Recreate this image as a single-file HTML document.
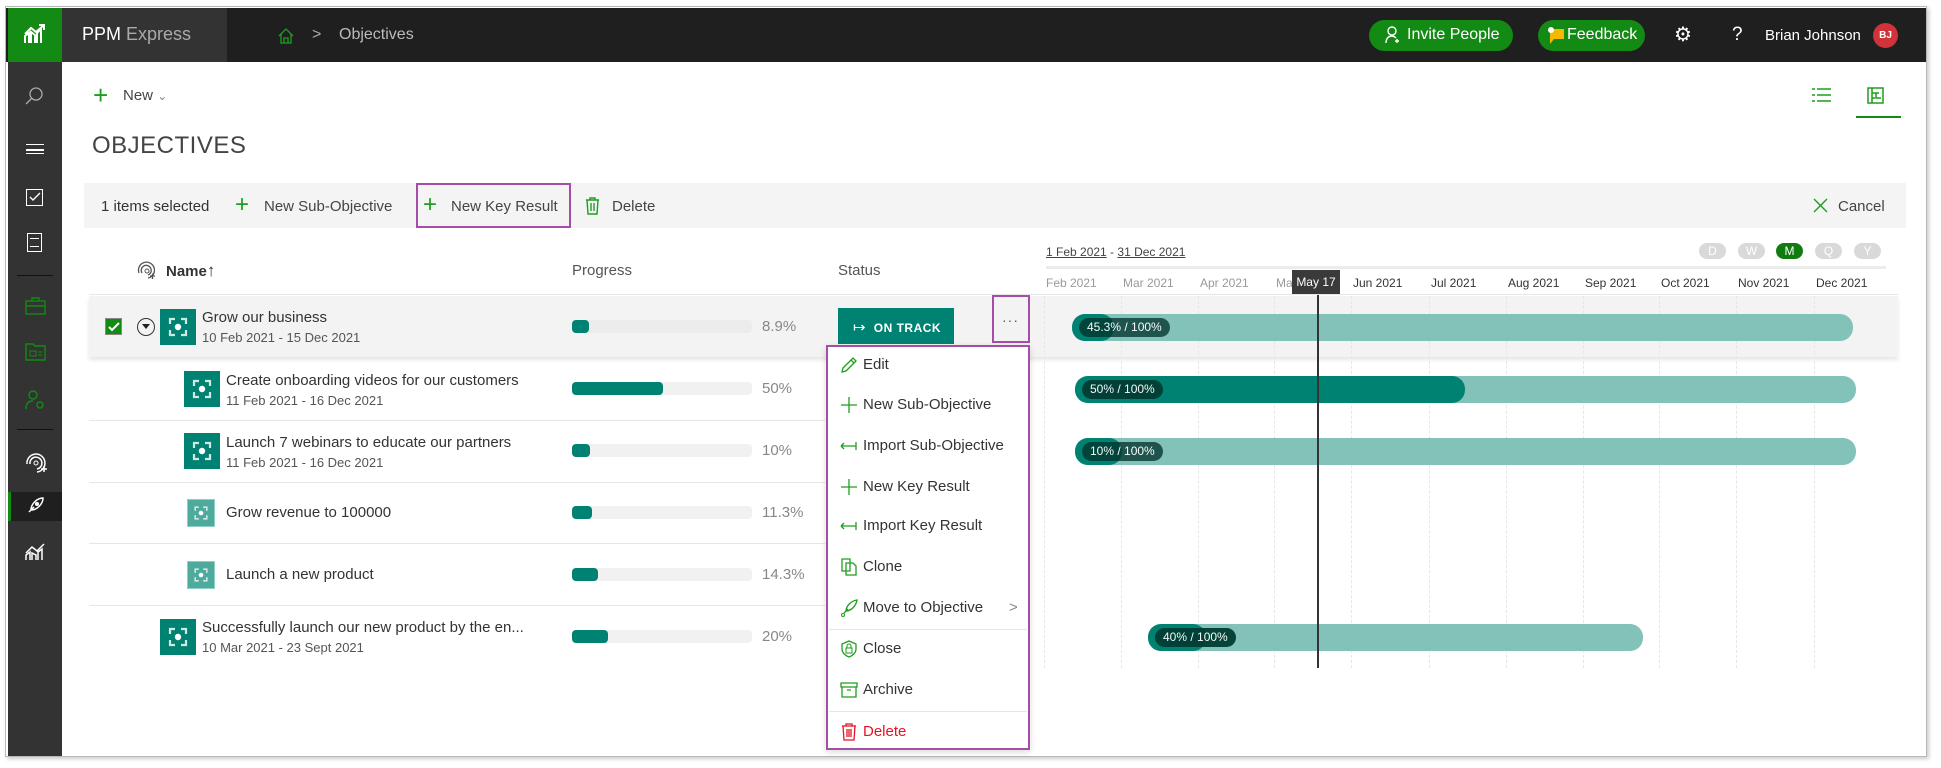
<!DOCTYPE html>
<html><head><meta charset="utf-8">
<style>
*{box-sizing:border-box;margin:0;padding:0}
body{width:1941px;height:768px;background:#fff;font-family:"Liberation Sans",sans-serif;position:relative;overflow:hidden;color:#333}
.a{position:absolute}
.frame{left:5px;top:6px;width:1922px;height:751px;border:1px solid #b8b8b8;box-shadow:2px 2px 4px #ccc;background:#fff}
.g{color:#1e9e1e}
.t{white-space:nowrap}
.row-ic{background:#008272;width:36px;height:36px}
.pb{height:13px;background:#f1f1f1;border-radius:4px;width:180px}
.pb i{display:block;height:13px;background:#008272;border-radius:4px}
.pct{font-size:15px;color:#888}
.title{font-size:15px;color:#333}
.date{font-size:13px;color:#555}
.bar{height:27px;background:#83c2b9;border-radius:13px}
.bar .d{position:absolute;left:0;top:0;height:27px;background:#008272;border-radius:13px}
.bar .l{position:absolute;left:7px;top:4px;height:19px;background:#003d33;color:#fff;font-size:12px;line-height:19px;padding:0 8px;border-radius:10px;opacity:.95}
.mon{font-size:12px;color:#333;top:276px}
.vl{top:296px;height:372px;border-left:1px dashed #e6e6e6}
.sep{left:89px;width:736px;height:1px;background:#e6e6e6}
.mi{left:826px;width:204px;font-size:15px;color:#333}
.mi span{position:absolute;left:37px;top:-9px}
.mi svg{position:absolute;left:14px;top:-9px}
.dwm{width:27px;height:16px;border-radius:8px;background:#d9d9d9;color:#fff;font-size:12px;text-align:center;line-height:16px;top:243px}
</style></head><body>
<div class="a frame"></div>
<div class="a" style="left:6px;top:8px;width:1920px;height:54px;background:#1f1f1f"></div>
<div class="a" style="left:62px;top:8px;width:165px;height:54px;background:#333"></div>
<div class="a" style="left:8px;top:8px;width:54px;height:54px;background:#138a13"></div>
<svg class="a" style="left:24px;top:24px" width="22" height="20" viewBox="0 0 22 20"><path d="M1 19V12L5 9V19M7 19V8L11 11V19M13 19V9L17 5V19M1 10L7 4L12 8L20 1M15 1H20V6" stroke="#fff" stroke-width="2" fill="none"/></svg>
<div class="a t" style="left:82px;top:24px;font-size:18px;color:#fff">PPM <span style="color:#aaa">Express</span></div>
<svg class="a" style="left:278px;top:28px" width="16" height="16" viewBox="0 0 16 16"><path d="M1 8L8 1L15 8M3 6V15H13V6M6 15V10H10V15" stroke="#1e9e1e" stroke-width="1.3" fill="none"/></svg>
<div class="a t" style="left:312px;top:26px;font-size:16px;color:#aaa">&gt;</div>
<div class="a t" style="left:339px;top:26px;font-size:16px;color:#bbb">Objectives</div>
<div class="a" style="left:1369px;top:20px;width:144px;height:31px;border-radius:16px;background:#138a13"></div>
<svg class="a" style="left:1385px;top:26px" width="16" height="18" viewBox="0 0 16 18"><circle cx="7" cy="5" r="4" stroke="#fff" fill="none" stroke-width="1.4"/><path d="M1 17C1 12 4 10 7 10C9 10 10 11 11 12M12 13V17M10 15H14" stroke="#fff" fill="none" stroke-width="1.4"/></svg>
<div class="a t" style="left:1407px;top:26px;font-size:16px;color:#fff">Invite People</div>
<div class="a" style="left:1538px;top:20px;width:107px;height:31px;border-radius:16px;background:#138a13"></div>
<svg class="a" style="left:1547px;top:26px" width="18" height="19" viewBox="0 0 18 19"><path d="M3 3H17V13H7L3 18Z" fill="#f5b800"/><circle cx="4" cy="4" r="3" fill="#fff"/></svg>
<div class="a t" style="left:1567px;top:26px;font-size:16px;color:#fff">Feedback</div>
<div class="a t" style="left:1674px;top:22px;font-size:20px;color:#fff">⚙</div>
<div class="a t" style="left:1732px;top:24px;font-size:19px;color:#fff">?</div>
<div class="a t" style="left:1765px;top:27px;font-size:15px;color:#fff">Brian Johnson</div>
<div class="a" style="left:1873px;top:23px;width:25px;height:25px;border-radius:50%;background:#d13438;color:#fff;font-size:10px;font-weight:bold;text-align:center;line-height:25px">BJ</div>
<div class="a" style="left:8px;top:62px;width:54px;height:694px;background:#333"></div>
<svg class="a" style="left:24px;top:86px" width="20" height="20" viewBox="0 0 20 20"><circle cx="12" cy="8" r="6" stroke="#aaa" fill="none" stroke-width="1.3"/><path d="M8 12L2 18" stroke="#aaa" stroke-width="1.3"/></svg>
<div class="a" style="left:26px;top:144px;width:18px;height:10px;border-top:1.5px solid #fff;border-bottom:1.5px solid #fff"></div>
<div class="a" style="left:26px;top:149px;width:18px;height:1.5px;background:#fff"></div>
<div class="a" style="left:26px;top:189px;width:17px;height:17px;border:1.5px solid #fff"></div>
<svg class="a" style="left:29px;top:192px" width="12" height="10"><path d="M1 5L4 8L11 1" stroke="#fff" fill="none" stroke-width="1.4"/></svg>
<div class="a" style="left:27px;top:233px;width:15px;height:19px;border:1.5px solid #fff"></div>
<div class="a" style="left:30px;top:238px;width:9px;height:9px;border-top:1px solid #fff;border-bottom:1px solid #fff"></div>
<div class="a" style="left:17px;top:275px;width:36px;height:1px;background:#111"></div>
<svg class="a" style="left:25px;top:296px" width="22" height="20"><rect x="1" y="5" width="19" height="13" stroke="#138a13" fill="none" stroke-width="1.4"/><path d="M7 5V2H14V5M1 10H20" stroke="#138a13" fill="none" stroke-width="1.4"/></svg>
<svg class="a" style="left:25px;top:342px" width="22" height="20"><path d="M1 2H8L10 4H20V18H1Z" stroke="#138a13" fill="none" stroke-width="1.4"/><rect x="5" y="9" width="6" height="5" stroke="#138a13" fill="none"/><path d="M13 10H17M13 13H17" stroke="#138a13"/></svg>
<svg class="a" style="left:25px;top:389px" width="22" height="22"><circle cx="8" cy="6" r="4" stroke="#138a13" fill="none" stroke-width="1.4"/><path d="M1 20C1 14 4 12 8 12" stroke="#138a13" fill="none" stroke-width="1.4"/><circle cx="15" cy="16" r="3" stroke="#138a13" fill="none" stroke-width="1.4"/></svg>
<div class="a" style="left:17px;top:429px;width:36px;height:1px;background:#111"></div>
<svg class="a" style="left:25px;top:452px" width="22" height="22"><path d="M2 12A9 9 0 1 1 12 20M5 12A6 6 0 1 1 12 17" stroke="#fff" fill="none" stroke-width="1.5"/><circle cx="11" cy="11" r="2" stroke="#fff" fill="none"/><path d="M16 17H22M19 14V20" stroke="#fff" stroke-width="1.5"/></svg>
<div class="a" style="left:8px;top:492px;width:54px;height:29px;background:#1f1f1f;border-left:3px solid #138a13"></div>
<svg class="a" style="left:25px;top:496px" width="20" height="20"><path d="M4 16L9 11M6 14C6 8 12 2 18 2C18 8 12 14 6 14Z" stroke="#fff" fill="none" stroke-width="1.5"/><circle cx="12" cy="8" r="2" fill="#fff"/></svg>
<svg class="a" style="left:25px;top:543px" width="20" height="18"><path d="M1 17V12L5 9V17M7 17V10L11 12V17M13 17V9L17 6V17M1 10L7 4L12 8L19 1" stroke="#fff" fill="none" stroke-width="1.5"/></svg>
<div class="a t g" style="left:93px;top:82px;font-size:26px;font-weight:300;line-height:26px">+</div>
<div class="a t" style="left:123px;top:87px;font-size:15px;color:#444">New <span style="color:#888;font-size:12px">&#8964;</span></div>
<div class="a t" style="left:92px;top:132px;font-size:24px;color:#444;letter-spacing:.5px;font-weight:300">OBJECTIVES</div>
<svg class="a" style="left:1812px;top:88px" width="19" height="14"><path d="M0 1H3M0 7H3M0 13H3M5 1H19M5 7H19M5 13H19" stroke="#1e9e1e" stroke-width="1.6"/></svg>
<svg class="a" style="left:1867px;top:87px" width="17" height="17"><rect x="1" y="1" width="15" height="15" stroke="#1e9e1e" fill="none" stroke-width="1.5"/><path d="M5 1V16M5 6H12M9 6V11H14M5 11H8" stroke="#1e9e1e" stroke-width="1.5" fill="none"/></svg>
<div class="a" style="left:1856px;top:116px;width:45px;height:2px;background:#138a13"></div>
<div class="a" style="left:84px;top:183px;width:1822px;height:45px;background:#f4f4f4"></div>
<div class="a t" style="left:101px;top:198px;font-size:15px;color:#333">1 items selected</div>
<div class="a t g" style="left:235px;top:191px;font-size:24px;font-weight:300">+</div>
<div class="a t" style="left:264px;top:198px;font-size:15px;color:#444">New Sub-Objective</div>
<div class="a" style="left:416px;top:183px;width:155px;height:45px;border:2.5px solid #a54ea9"></div>
<div class="a t g" style="left:423px;top:191px;font-size:24px;font-weight:300">+</div>
<div class="a t" style="left:451px;top:198px;font-size:15px;color:#444">New Key Result</div>
<svg class="a" style="left:585px;top:197px" width="15" height="18"><path d="M1 3H14M5 3V1H10V3M2 3L3 17H12L13 3M6 6V14M9 6V14" stroke="#1e9e1e" fill="none" stroke-width="1.4"/></svg>
<div class="a t" style="left:612px;top:198px;font-size:15px;color:#444">Delete</div>
<svg class="a" style="left:1813px;top:198px" width="15" height="15"><path d="M1 1L14 14M14 1L1 14" stroke="#1e9e1e" stroke-width="1.4"/></svg>
<div class="a t" style="left:1838px;top:198px;font-size:15px;color:#444">Cancel</div>
<svg class="a" style="left:137px;top:261px" width="18" height="18"><path d="M2 12A8 8 0 1 1 11 17M5 12A5 5 0 1 1 11 14" stroke="#555" fill="none" stroke-width="1.3"/><circle cx="10" cy="10" r="2" stroke="#555" fill="none"/><path d="M13 15H18M15.5 12.5V18" stroke="#555" stroke-width="1.3"/></svg>
<div class="a t" style="left:166px;top:261px;font-size:15px;color:#333;font-weight:bold">Name<span style="font-weight:normal;font-size:17px">↑</span></div>
<div class="a t" style="left:572px;top:262px;font-size:15px;color:#555">Progress</div>
<div class="a t" style="left:838px;top:262px;font-size:15px;color:#555">Status</div>
<div class="a t" style="left:1046px;top:245px;font-size:12px;color:#444"><u>1 Feb 2021</u> - <u>31 Dec 2021</u></div>
<div class="a dwm" style="left:1699px">D</div>
<div class="a dwm" style="left:1738px">W</div>
<div class="a dwm" style="left:1776px;background:#107c10">M</div>
<div class="a dwm" style="left:1815px">Q</div>
<div class="a dwm" style="left:1854px">Y</div>
<div class="a" style="left:1046px;top:266px;width:840px;height:3px;background:#ececec"></div>
<div class="a mon t" style="left:1046px;color:#999">Feb 2021</div>
<div class="a mon t" style="left:1123px;color:#999">Mar 2021</div>
<div class="a mon t" style="left:1200px;color:#999">Apr 2021</div>
<div class="a mon t" style="left:1276px;color:#999">Ma</div>
<div class="a mon t" style="left:1353px">Jun 2021</div>
<div class="a mon t" style="left:1431px">Jul 2021</div>
<div class="a mon t" style="left:1508px">Aug 2021</div>
<div class="a mon t" style="left:1585px">Sep 2021</div>
<div class="a mon t" style="left:1661px">Oct 2021</div>
<div class="a mon t" style="left:1738px">Nov 2021</div>
<div class="a mon t" style="left:1816px">Dec 2021</div>
<div class="a t" style="left:1292px;top:270px;width:48px;height:25px;background:#3a3a3a;color:#fff;font-size:12px;line-height:25px;text-align:center">May 17</div>
<div class="a" style="left:89px;top:294px;width:1809px;height:1px;background:#e6e6e6"></div>
<div class="a" style="left:89px;top:296px;width:1809px;height:61px;background:#f3f3f3;box-shadow:0 3px 4px rgba(0,0,0,.1)"></div>
<div class="a vl" style="left:1044px"></div><div class="a vl" style="left:1121px"></div><div class="a vl" style="left:1198px"></div><div class="a vl" style="left:1274px"></div><div class="a vl" style="left:1351px"></div><div class="a vl" style="left:1429px"></div><div class="a vl" style="left:1506px"></div><div class="a vl" style="left:1583px"></div><div class="a vl" style="left:1659px"></div><div class="a vl" style="left:1736px"></div><div class="a vl" style="left:1814px"></div>
<div class="a" style="left:105px;top:318px;width:17px;height:17px;background:#138a13;border:1px solid #888"></div>
<svg class="a" style="left:108px;top:322px" width="12" height="10"><path d="M1 5L4 8L11 1" stroke="#fff" fill="none" stroke-width="2"/></svg>
<div class="a" style="left:137px;top:318px;width:18px;height:18px;border-radius:50%;border:1px solid #333"></div>
<div class="a" style="left:142px;top:324px;width:0;height:0;border-left:4px solid transparent;border-right:4px solid transparent;border-top:5px solid #222"></div>
<svg width="0" height="0" style="position:absolute"><defs><symbol id="oi" viewBox="0 0 36 36"><path d="M10 15V10H15M21 10H26V15M26 21V26H21M15 26H10V21" stroke="#cfe9e4" stroke-width="2.2" fill="none"/><circle cx="18" cy="18" r="3.2" fill="#fff"/></symbol></defs></svg>
<svg class="a row-ic" style="left:160px;top:309px" width="36" height="36"><use href="#oi"/></svg>
<div class="a t title" style="left:202px;top:309px">Grow our business</div>
<div class="a t date" style="left:202px;top:330px">10 Feb 2021 - 15 Dec 2021</div>
<div class="a pb" style="left:572px;top:320px;background:#ececec"><i style="width:17px"></i></div>
<div class="a t pct" style="left:762px;top:318px">8.9%</div>
<div class="a" style="left:838px;top:308px;width:116px;height:36px;background:#008272"></div>
<div class="a t" style="left:853px;top:318px;font-size:12px;color:#fff;font-weight:bold;letter-spacing:.5px"><span style="font-size:15px;font-weight:normal">↦</span>&nbsp; ON TRACK</div>
<div class="a" style="left:992px;top:295px;width:38px;height:48px;border:2.5px solid #a54ea9"></div>
<div class="a t" style="left:1002px;top:312px;font-size:14px;color:#555;letter-spacing:1px">···</div>
<svg class="a row-ic" style="left:184px;top:371px" width="36" height="36"><use href="#oi"/></svg>
<div class="a t title" style="left:226px;top:372px">Create onboarding videos for our customers</div>
<div class="a t date" style="left:226px;top:393px">11 Feb 2021 - 16 Dec 2021</div>
<div class="a pb" style="left:572px;top:382px"><i style="width:91px"></i></div>
<div class="a t pct" style="left:762px;top:380px">50%</div>
<div class="a sep" style="top:420px"></div>
<svg class="a row-ic" style="left:184px;top:433px" width="36" height="36"><use href="#oi"/></svg>
<div class="a t title" style="left:226px;top:434px">Launch 7 webinars to educate our partners</div>
<div class="a t date" style="left:226px;top:455px">11 Feb 2021 - 16 Dec 2021</div>
<div class="a pb" style="left:572px;top:444px"><i style="width:18px"></i></div>
<div class="a t pct" style="left:762px;top:442px">10%</div>
<div class="a sep" style="top:482px"></div>
<svg class="a" style="left:187px;top:499px;background:#4daa9c;border:1px solid #8fcfc5" width="28" height="28"><use href="#oi"/></svg>
<div class="a t title" style="left:226px;top:504px">Grow revenue to 100000</div>
<div class="a pb" style="left:572px;top:506px"><i style="width:20px"></i></div>
<div class="a t pct" style="left:762px;top:504px">11.3%</div>
<div class="a sep" style="top:543px"></div>
<svg class="a" style="left:187px;top:561px;background:#4daa9c;border:1px solid #8fcfc5" width="28" height="28"><use href="#oi"/></svg>
<div class="a t title" style="left:226px;top:566px">Launch a new product</div>
<div class="a pb" style="left:572px;top:568px"><i style="width:26px"></i></div>
<div class="a t pct" style="left:762px;top:566px">14.3%</div>
<div class="a sep" style="top:605px"></div>
<svg class="a row-ic" style="left:160px;top:619px" width="36" height="36"><use href="#oi"/></svg>
<div class="a t title" style="left:202px;top:619px">Successfully launch our new product by the en...</div>
<div class="a t date" style="left:202px;top:640px">10 Mar 2021 - 23 Sept 2021</div>
<div class="a pb" style="left:572px;top:630px"><i style="width:36px"></i></div>
<div class="a t pct" style="left:762px;top:628px">20%</div>
<div class="a bar" style="left:1072px;top:314px;width:781px"><div class="d" style="width:42px"></div><div class="l" style="background:rgba(0,50,42,.8)">45.3% / 100%</div></div>
<div class="a bar" style="left:1075px;top:376px;width:781px"><div class="d" style="width:390px"></div><div class="l">50% / 100%</div></div>
<div class="a bar" style="left:1075px;top:438px;width:781px"><div class="d" style="width:47px"></div><div class="l" style="background:rgba(0,50,42,.8)">10% / 100%</div></div>
<div class="a bar" style="left:1148px;top:624px;width:495px"><div class="d" style="width:58px"></div><div class="l">40% / 100%</div></div>
<div class="a" style="left:1317px;top:295px;width:1.5px;height:373px;background:#333"></div>
<div class="a" style="left:826px;top:345px;width:204px;height:405px;background:#fff;border:2.5px solid #a54ea9;box-shadow:0 2px 6px rgba(0,0,0,.15)"></div>
<div class="a mi" style="top:365px"><svg width="18" height="18"><path d="M2 16L3 12L13 2L16 5L6 15Z M11 4L14 7" stroke="#1e9e1e" fill="none" stroke-width="1.3"/></svg><span>Edit</span></div>
<div class="a mi" style="top:405px"><svg width="18" height="18"><path d="M9 1V17M1 9H17" stroke="#1e9e1e" stroke-width="1.3"/></svg><span>New Sub-Objective</span></div>
<div class="a mi" style="top:446px"><svg width="18" height="18"><path d="M1 9H16M16 5V13M1 9L4 6M1 9L4 12" stroke="#1e9e1e" fill="none" stroke-width="1.3"/></svg><span>Import Sub-Objective</span></div>
<div class="a mi" style="top:487px"><svg width="18" height="18"><path d="M9 1V17M1 9H17" stroke="#1e9e1e" stroke-width="1.3"/></svg><span>New Key Result</span></div>
<div class="a mi" style="top:526px"><svg width="18" height="18"><path d="M1 9H16M16 5V13M1 9L4 6M1 9L4 12" stroke="#1e9e1e" fill="none" stroke-width="1.3"/></svg><span>Import Key Result</span></div>
<div class="a mi" style="top:567px"><svg width="18" height="18"><path d="M2 1H10V13H2Z M6 5H13L16 8V17H6Z" stroke="#1e9e1e" fill="#fff" stroke-width="1.3"/></svg><span>Clone</span></div>
<div class="a mi" style="top:608px"><svg width="18" height="18"><path d="M4 14L8 10M6 12C6 7 11 2 17 1C16 7 11 12 6 12Z" stroke="#1e9e1e" fill="none" stroke-width="1.3"/><circle cx="3" cy="16" r="1.5" stroke="#1e9e1e" fill="none"/></svg><span>Move to Objective</span><b style="position:absolute;left:183px;top:-9px;font-weight:normal;color:#888">&gt;</b></div>
<div class="a" style="left:829px;top:629px;width:198px;height:1px;background:#e6e6e6"></div>
<div class="a mi" style="top:649px"><svg width="18" height="18"><path d="M9 1L16 4V9C16 13 12 16 9 17C6 16 2 13 2 9V4Z" stroke="#1e9e1e" fill="none" stroke-width="1.3"/><rect x="6" y="8" width="6" height="5" stroke="#1e9e1e" fill="none"/><path d="M7 8V6A2 2 0 0 1 11 6V8" stroke="#1e9e1e" fill="none"/></svg><span>Close</span></div>
<div class="a mi" style="top:690px"><svg width="18" height="18"><path d="M1 2H17V6H1Z M2 6V16H16V6 M7 9H11" stroke="#1e9e1e" fill="none" stroke-width="1.3"/></svg><span>Archive</span></div>
<div class="a" style="left:829px;top:711px;width:198px;height:1px;background:#e6e6e6"></div>
<div class="a mi" style="top:732px"><svg width="18" height="18"><path d="M2 3H16M6 3V1H12V3M3 3L4 17H14L15 3M7 6V14M9 6V14M11 6V14" stroke="#e81123" fill="none" stroke-width="1.3"/></svg><span style="color:#e81123">Delete</span></div>
</body></html>
